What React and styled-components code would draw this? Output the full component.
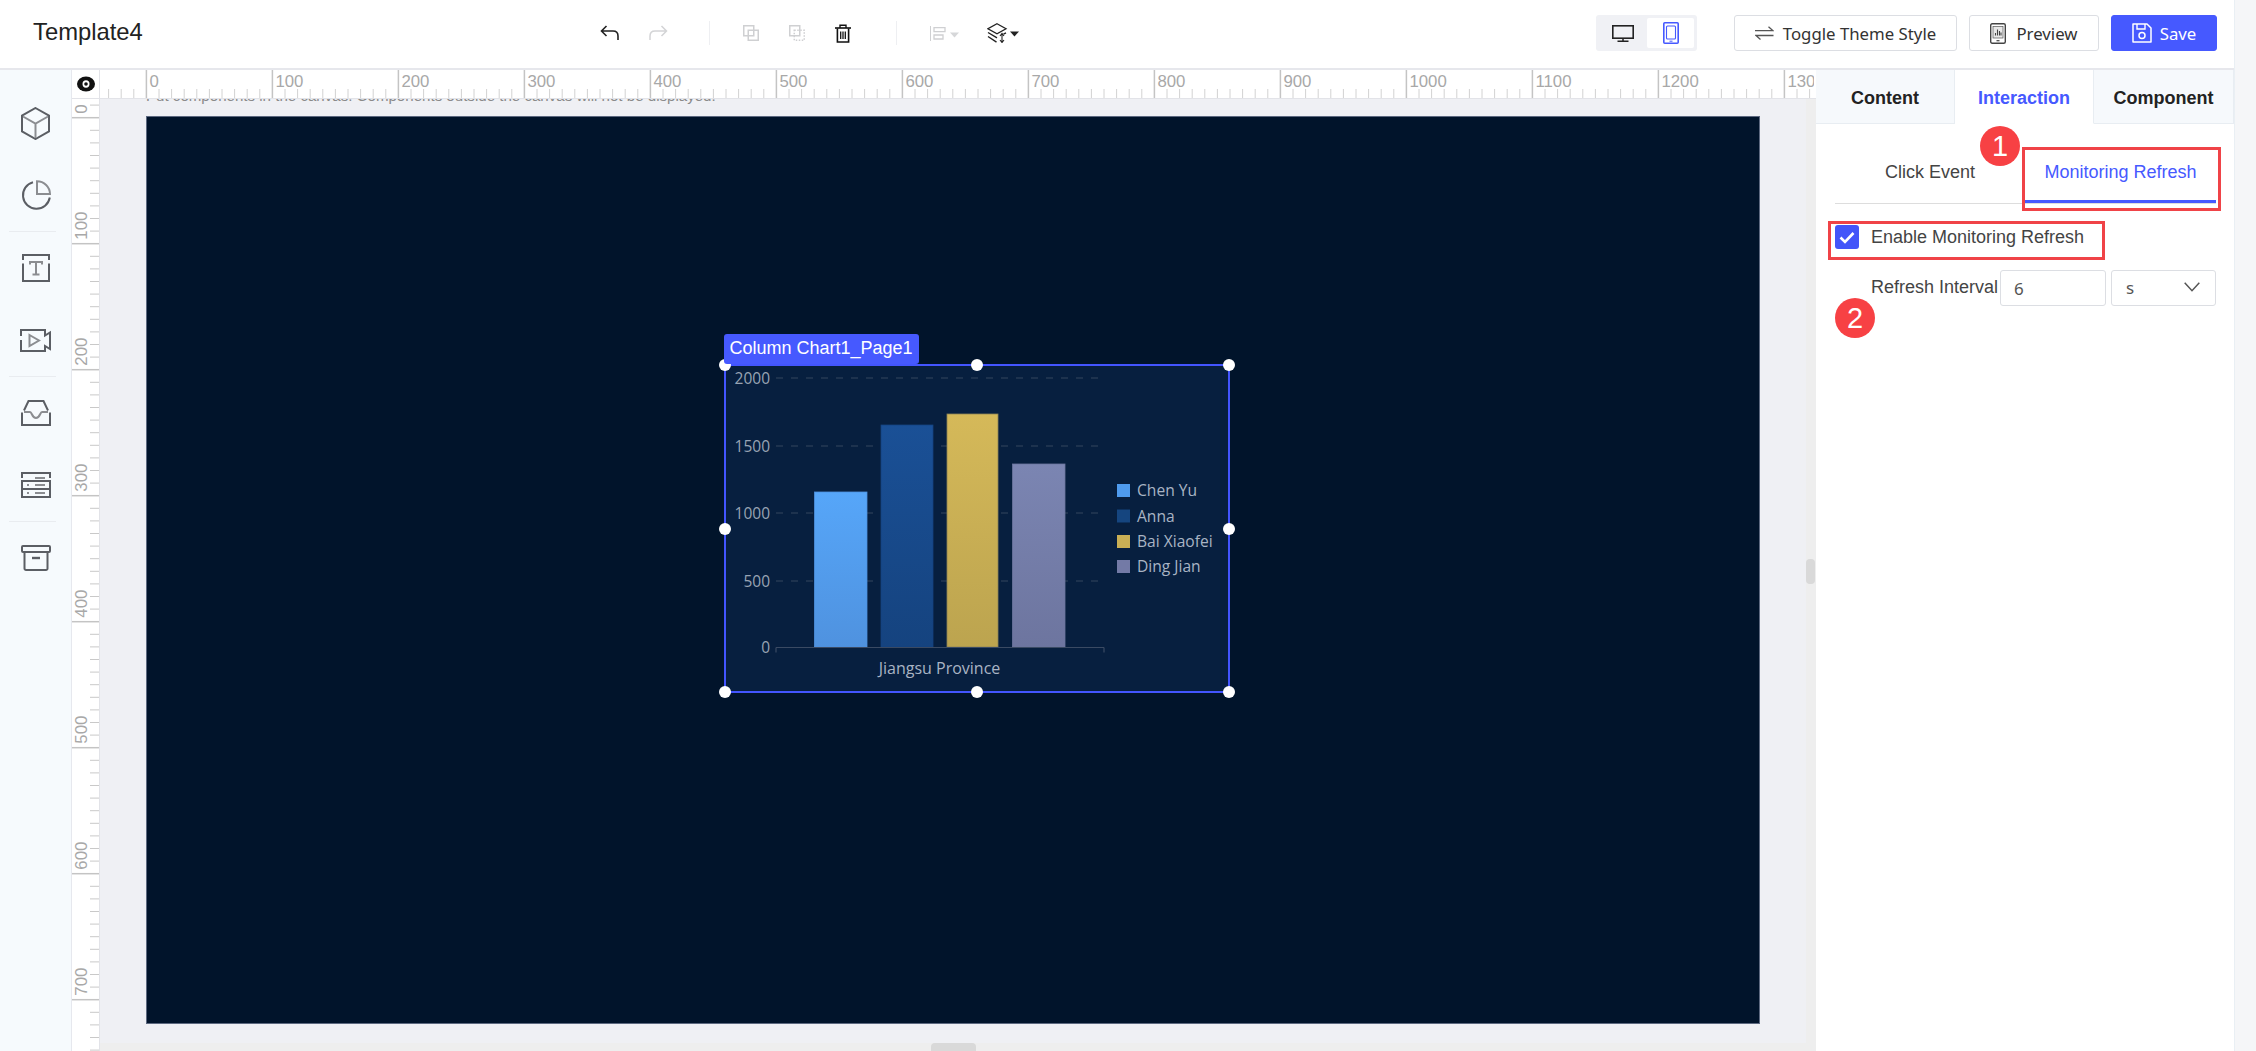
import React from 'react';
import styled, { createGlobalStyle } from 'styled-components';

const Global = createGlobalStyle`
  html, body { margin: 0; padding: 0; height: 100%; overflow: hidden; background: #f5f6f8; }
  #root { height: 100%; }
  * { box-sizing: border-box; }
`;

const Page = styled.div`
  display: flex; width: 2256px; height: 1051px; overflow: hidden;
  font-family: "Liberation Sans", Arial, sans-serif; color: #333;
`;
const Main = styled.div`display: flex; flex-direction: column; width: 2234px; height: 100%; background: #fff;`;
const Gutter = styled.div`flex: 1; background: #f5f6f8; border-left: 1px solid #e9eff4;`;

const Header = styled.header`
  display: flex; align-items: center; flex: 0 0 70px; padding: 0 17px 2px 33px;
  background: #fff; border-bottom: 2px solid #e6e7ec;
`;
const Title = styled.h1`flex: 0 0 567px; margin: 0 0 2px; font-size: 23.8px; font-weight: 400; color: #222; line-height: 28px;`;
const ToolGroup = styled.div`display: flex; align-items: center; gap: ${p => p.$gap}px; margin-left: ${p => p.$ml}px;`;
const ToolDivider = styled.span`width: 1px; height: 24px; background: #eeeff2; margin-left: ${p => p.$ml}px;`;
const Spacer = styled.div`flex: 1;`;
const ViewSwitch = styled.div`
  display: flex; align-items: center; justify-content: space-between; width: 101px; height: 36px; padding: 3px 3px 3px 16px;
  background: #f0f1f5; border-radius: 3px; margin-right: 37px;
`;
const ViewActive = styled.div`display: flex; align-items: center; justify-content: center; width: 47px; height: 30px; background: #fff; border-radius: 2px;`;
const Btn = styled.button`
  display: flex; align-items: center; justify-content: center; gap: ${p => p.$gap}px;
  width: ${p => p.$w}px; height: 36px; margin-left: ${p => p.$ml || 0}px; padding: 0;
  border: 1px solid ${p => (p.$primary ? '#4659ff' : '#dcdee3')}; border-radius: 3px;
  background: ${p => (p.$primary ? '#4659ff' : '#fff')}; color: ${p => (p.$primary ? '#fff' : '#333')};
  font-family: "Noto Sans", sans-serif; font-size: 16.8px;
`;

const Body = styled.div`display: flex; flex: 1; min-height: 0;`;
const Sidebar = styled.nav`
  flex: 0 0 72px; display: flex; flex-direction: column; padding-top: 17px;
  background: #f6fafd; border-right: 1px solid #e6e8ee;
`;
const SideSlot = styled.div`display: flex; align-items: center; justify-content: center; height: 72px; flex: none;`;
const SideDivider = styled.div`height: 1px; flex: none; margin: 0 15px 0 9px; background: #e9ecf0;`;
const Stage = styled.div`flex: 0 0 1744px; display: flex; flex-direction: column; min-height: 0;`;
const RulerTop = styled.div`display: flex; flex: 0 0 28px; background: #fff; border-bottom: 1px solid #e2e3e8;`;
const Corner = styled.div`display: flex; align-items: center; justify-content: center; flex: 0 0 28px; border-right: 1px solid #e2e3e8;`;
const RulerGap = styled.div`flex: 1; background: #fff;`;
const StageRow = styled.div`display: flex; flex: 1; min-height: 0;`;
const RulerSide = styled.div`flex: 0 0 28px; background: #fff; border-right: 1px solid #e2e3e8; overflow: hidden;`;
const ViewportColumn = styled.div`flex: 1; display: flex; flex-direction: column; min-width: 0;`;
const ViewportRow = styled.div`flex: 1; display: flex; min-height: 0;`;
const Workspace = styled.div`flex: 1; background: #eff0f4; overflow: hidden; padding-left: 46px;`;
const Hint = styled.div`margin-top: -12px; height: 18px; font-size: 15.1px; line-height: 18px; color: #8a8a8a; white-space: nowrap;`;
const Canvas = styled.div`position: relative; width: 1614px; height: 908px; margin-top: 11px; background: #01142b; border: 1px solid #5d6980;`;
const VTrack = styled.div`flex: 0 0 10px; background: #eeeeee; padding-top: 460px;`;
const VThumb = styled.div`width: 9px; height: 25px; border-radius: 4px; background: #d9d9d9;`;
const HTrack = styled.div`flex: 0 0 8px; background: #eeeeee; padding-left: 831px;`;
const HThumb = styled.div`width: 45px; height: 8px; border-radius: 4px 4px 0 0; background: #d9d9d9;`;

const ChartBox = styled.div`
  position: absolute; left: 577px; top: 247px; width: 506px; height: 329px;
  background: #071f3f; border: 2px solid #4355ff;
`;
const ChartSvg = styled.svg`position: absolute; left: -1px; top: -1px; font-family: "Open Sans", sans-serif;`;
const ChartLabel = styled.div`
  position: absolute; left: -2px; top: -32px; height: 30px; padding: 0 6px 0 5.5px; line-height: 28px; z-index: 2;
  background: #4659ff; color: #fff; font-size: 18px; white-space: nowrap; border-radius: 3px;
`;
const Handle = styled.span`
  position: absolute; width: 12px; height: 12px; border-radius: 50%; background: #fff; z-index: 1;
  left: calc(${p => p.$x}% - 7px + ${p => p.$x / 50}px); top: calc(${p => p.$y}% - 7px + ${p => p.$y / 50}px);
`;

const Panel = styled.aside`position: relative; flex: 1; background: #fff; min-width: 0;`;
const Tabs = styled.div`display: grid; grid-template-columns: 139px 139px 140px; height: 54px;`;
const Tab = styled.div`
  display: flex; align-items: center; justify-content: center; padding-top: 3px;
  font-size: 18px; font-weight: 700; color: ${p => (p.$active ? '#4659ff' : '#222')};
  background: ${p => (p.$active ? '#fff' : '#f6f9fc')};
  border-bottom: 1px solid ${p => (p.$active ? '#fff' : '#e8edf2')};
  border-right: 1px solid #e8edf2;
`;
const SubTabs = styled.div`display: grid; grid-template-columns: 190px 191px; width: 381px; margin: 16px 0 0 19px; border-bottom: 1px solid #dddddd;`;
const SubTab = styled.div`
  display: flex; align-items: center; justify-content: center; height: 63px; padding-top: 5px;
  font-size: 18px; color: ${p => (p.$active ? '#4659ff' : '#444')};
  border-bottom: 3px solid ${p => (p.$active ? '#4659ff' : 'transparent')};
`;
const CheckRow = styled.label`display: flex; align-items: center; gap: 12px; height: 24px; margin: 21px 0 0 19px; font-size: 18px; color: #444;`;
const CheckBox = styled.span`display: flex; align-items: center; justify-content: center; width: 24px; height: 24px; background: #4355f9; border-radius: 3px;`;
const IntervalRow = styled.div`display: flex; align-items: center; height: 36px; margin: 21px 0 0 55px; font-size: 18px; color: #444;`;
const IntervalLabel = styled.span`width: 129px; margin-top: -2px; white-space: nowrap;`;
const NumberInput = styled.input`
  width: 106px; height: 36px; padding: 1px 13px 0; border: 1px solid #dcdee3; border-radius: 3px; outline: none;
  font-family: "Noto Sans", sans-serif; font-size: 17px; color: #555; background: #fff;
`;
const SelectBox = styled.div`
  display: flex; align-items: center; justify-content: space-between; width: 105px; height: 36px; margin-left: 5px; padding: 0 15px 2px 14px;
  border: 1px solid #dcdee3; border-radius: 3px; font-family: "Noto Sans", sans-serif; font-size: 17px; color: #555;
`;
const RedFrame = styled.div`
  position: absolute; left: ${p => p.$l}px; top: ${p => p.$t}px; width: ${p => p.$w}px; height: ${p => p.$h}px;
  border: 3px solid #f04347; pointer-events: none;
`;
const Badge = styled.div`
  position: absolute; left: ${p => p.$l}px; top: ${p => p.$t}px; display: flex; align-items: center; justify-content: center;
  width: 40px; height: 40px; border-radius: 50%; background: #f74144; color: #fff; font-size: 29px;
`;

const Svg = ({ w, h, children, ...rest }) => (
  <svg width={w} height={h} viewBox={`0 0 ${w} ${h}`} fill="none" {...rest}>{children}</svg>
);

const Undo = ({ c = '#222' }) => (
  <Svg w={19} h={16}><path d="M6.5 1 1.5 6l5 5M1.5 6H13c3 0 5 2 5 5v4" stroke={c} strokeWidth="1.6" /></Svg>
);
const Redo = () => (
  <Svg w={19} h={16}><path d="M12.5 1l5 5-5 5M17.5 6H6c-3 0-5 2-5 5v4" stroke="#d3d4d6" strokeWidth="1.5" /></Svg>
);
const CopyFront = () => (
  <Svg w={16} h={16}>
    <path d="M.75.75h10v10h-10zM5.25 5.25h10v10h-10z" stroke="#cfd0d2" strokeWidth="1.5" />
  </Svg>
);
const CopyBack = () => (
  <Svg w={16} h={16}>
    <path d="M.75.75h10v10h-10z" stroke="#cfd0d2" strokeWidth="1.5" />
    <path d="M5.25 5.25h10v10h-10z" stroke="#cfd0d2" strokeWidth="1.5" strokeDasharray="1.5 1.5" />
  </Svg>
);
const Trash = () => (
  <Svg w={16} h={19}>
    <path d="M0 4h16" stroke="#111" strokeWidth="1.6" />
    <path d="M5 4V1.2h6V4" stroke="#111" strokeWidth="1.4" />
    <path d="M2.4 4.5v13.5h11.2V4.5" stroke="#111" strokeWidth="1.6" />
    <path d="M5.7 7.5v7.5M8 7.5v7.5M10.3 7.5v7.5" stroke="#111" strokeWidth="1.3" />
  </Svg>
);
const AlignIcon = () => (
  <Svg w={29} h={15}>
    <path d="M.5 0v15" stroke="#cfd0d2" />
    <path d="M4 1.7h11v4H4zM4 9h9v4H4z" stroke="#cfd0d2" strokeWidth="1.3" />
    <path d="M20 6.500h9l-4.500 5z" fill="#d6d7d9" />
  </Svg>
);
const LayersIcon = () => (
  <Svg w={32} h={20}>
    <path d="M10 .8l9 5-9 5-9-5z" stroke="#222" strokeWidth="1.300" />
    <path d="M1 9.500l9 5.300M1 13.500l8.500 5.600M19 9.800l-2.500 1.400" stroke="#222" strokeWidth="1.400" />
    <path d="M15 10.500v9M13 17l2 2.500 2-2.500M13 13l2-2.500 2 2.500" stroke="#222" strokeWidth="1.100" />
    <path d="M23 8.500h9l-4.500 5z" fill="#222" />
  </Svg>
);
const Desktop = () => (
  <Svg w={22} h={17}>
    <rect x=".8" y=".8" width="20.4" height="12.4" stroke="#222" strokeWidth="1.6" />
    <path d="M11 13v3M5.500 16.200h11" stroke="#222" strokeWidth="1.5" />
  </Svg>
);
const Phone = () => (
  <Svg w={16} h={22}>
    <rect x=".8" y=".8" width="14.4" height="20.4" rx="1" stroke="#4659ff" strokeWidth="1.6" />
    <rect x="3.5" y="4" width="9" height="13" rx="1" stroke="#4659ff" strokeWidth="1.1" />
    <path d="M6.5 19.2h3" stroke="#4659ff" />
  </Svg>
);
const Swap = () => (
  <Svg w={19} h={14}>
    <path d="M0 4.700h18L13.500.700M18.500 9.500H1L5.500 13.500" stroke="#555" strokeWidth="1.3" />
  </Svg>
);
const PreviewIcon = () => (
  <Svg w={16} h={21}>
    <rect x=".7" y=".7" width="14.6" height="19.6" rx="1.5" stroke="#444" strokeWidth="1.4" />
    <rect x="3" y="3.5" width="10" height="11.5" fill="#e8e8e8" stroke="#555" strokeWidth=".7" />
    <path d="M5.5 12.500v-2.500M7.500 12.500V6.500M9.500 12.500V8M11 12.500V9.500" stroke="#444" strokeWidth="1.1" />
    <path d="M6.5 17.7h3" stroke="#444" strokeWidth="1.2" />
  </Svg>
);
const SaveIcon = () => (
  <Svg w={20} h={20}>
    <path d="M1 1h14l4 4v14H1z" stroke="#fff" strokeWidth="1.5" strokeLinejoin="round" />
    <path d="M5 1v5h8V1" stroke="#fff" strokeWidth="1.4" />
    <circle cx="10" cy="12.5" r="3" stroke="#fff" strokeWidth="1.5" />
  </Svg>
);
const Eye = () => (
  <Svg w={20} h={20}>
    <ellipse cx="10" cy="10" rx="9" ry="7.5" fill="#111" />
    <ellipse cx="10" cy="10" rx="3.5" ry="3.7" fill="#fff" />
    <circle cx="10" cy="10" r="1.8" fill="#111" />
  </Svg>
);
const Check = () => (
  <Svg w={16} h={13}><path d="M1.500 6.500 6 11l8.500-9" stroke="#fff" strokeWidth="2.6" /></Svg>
);
const Chevron = () => (
  <Svg w={16} h={10}><path d="M.7.7 8 8.700 15.300.7" stroke="#555" strokeWidth="1.5" /></Svg>
);

const sideDark = '#5b5e64';
const sideSoft = '#8b8d91';
const Cube = () => (
  <Svg w={29} h={33}>
    <path d="M14.500 1 28 8.700v15.600L14.500 32 1 24.300V8.700z" stroke={sideDark} strokeWidth="2" />
    <path d="M2 9.500l12.500 7 12.500-7M14.500 16.500V31" stroke={sideSoft} strokeWidth="2" />
  </Svg>
);
const Pie = () => (
  <Svg w={31} h={30}>
    <path d="M13 2.200A13.500 13.500 0 1 0 29.800 17.500" stroke={sideDark} strokeWidth="2" />
    <path d="M17 1.200A13 13 0 0 1 30 14H17z" stroke={sideSoft} strokeWidth="2" />
  </Svg>
);
const TextIcon = () => (
  <Svg w={28} h={28}>
    <path d="M1 6V1h26v5M27 9.500V27H1V9.500" stroke={sideDark} strokeWidth="2" />
    <path d="M8 10.500V8h12v2.500M14 8v12M10.500 20.500h7" stroke={sideSoft} strokeWidth="2" />
  </Svg>
);
const VideoIcon = () => (
  <Svg w={31} h={23}>
    <path d="M1 7V1h24v5.500l5-3V20l-5-3v5H1V11" stroke={sideDark} strokeWidth="2" />
    <path d="M9.500 6 19 11.500 9.500 17z" stroke={sideSoft} strokeWidth="2" />
  </Svg>
);
const InboxIcon = () => (
  <Svg w={30} h={26}>
    <path d="M3 10.500 7.500 1h15L27 10.500" stroke={sideDark} strokeWidth="2" />
    <path d="M1 12.500V25h28V12.500" stroke={sideDark} strokeWidth="2" />
    <path d="M3 12h6c2 0 2 6 6 6s4-6 6-6h6" stroke={sideSoft} strokeWidth="2" />
  </Svg>
);
const ServerIcon = () => (
  <Svg w={30} h={26}>
    <path d="M1 6V1h28v5" stroke={sideDark} strokeWidth="2" />
    <path d="M14 6h10" stroke={sideSoft} strokeWidth="2" />
    <path d="M1 9h28v8H1zM1 17h28v8H1z" stroke={sideDark} strokeWidth="2" />
    <path d="M6 13h2M14 13h10M6 21h2M14 21h10" stroke={sideSoft} strokeWidth="2" />
  </Svg>
);
const ArchiveIcon = () => (
  <Svg w={30} h={26}>
    <rect x="1" y="1" width="28" height="6" rx="1" stroke={sideDark} strokeWidth="2" />
    <path d="M3.500 8v15.500a1.500 1.500 0 0 0 1.500 1.500h20a1.500 1.500 0 0 0 1.500-1.500V8" stroke={sideDark} strokeWidth="2" />
    <path d="M11 13h8" stroke={sideDark} strokeWidth="2.4" />
  </Svg>
);

const tick = 12.6;
const RulerH = () => {
  const origin = 46.4;
  const items = [];
  for (let i = -3; i <= 132; i++) {
    const x = origin + i * tick;
    const major = i % 10 === 0 && i >= 0;
    items.push(
      <line key={i} x1={x} x2={x} y1={major ? 0 : 19} y2={28} stroke={major ? '#c4c4c4' : '#d2d2d2'} strokeWidth={major ? 1.5 : 1} />
    );
    if (major) {
      items.push(
        <text key={`t${i}`} x={x + 3} y={17} fontSize="16.8" fill="#a8a8a8" fontFamily="Liberation Sans, sans-serif">{i * 10}</text>
      );
    }
  }
  return <svg width={1714} height={28} viewBox="0 0 1714 28">{items}</svg>;
};
const RulerV = () => {
  const origin = 18.7;
  const items = [];
  for (let i = -1; i <= 76; i++) {
    const y = origin + i * tick;
    const major = i % 10 === 0 && i >= 0;
    items.push(
      <line key={i} x1={major ? 0 : 18} x2={27} y1={y} y2={y} stroke={major ? '#c4c4c4' : '#c9c9c9'} strokeWidth={major ? 1.5 : 1} />
    );
    if (major) {
      items.push(
        <text key={`t${i}`} transform={`translate(15 ${y - 4}) rotate(-90)`} fontSize="16.8" fill="#a8a8a8" fontFamily="Liberation Sans, sans-serif">{i * 10}</text>
      );
    }
  }
  return <svg width={27} height={953} viewBox="0 0 27 953">{items}</svg>;
};

const grid = [378, 446, 513, 581];
const yLabels = [['2000', 378], ['1500', 446], ['1000', 513], ['500', 581], ['0', 647]];
const bars = [
  { x: 814.5, w: 52.5, top: 492, id: 'g1', from: '#56a6f9', to: '#4f92df', stroke: '#4f92df' },
  { x: 881, w: 52, top: 425, id: 'g2', from: '#1a5096', to: '#15437f', stroke: '#15437f' },
  { x: 947, w: 51, top: 414, id: 'g3', from: '#d5b959', to: '#bca44f', stroke: '#8c8355' },
  { x: 1012.5, w: 52.5, top: 464, id: 'g4', from: '#7b85b2', to: '#6d759f', stroke: '#6d759f' }
];
const legend = [['Chen Yu', 484, '#4f9bee', 490], ['Anna', 509.5, '#15457f', 516], ['Bai Xiaofei', 535, '#c9af55', 541], ['Ding Jian', 560, '#737aa6', 566]];

const ChartDrawing = () => (
  <ChartSvg width={504} height={327} viewBox="725 365 504 327">
    <defs>
      {bars.map(b => (
        <linearGradient key={b.id} id={b.id} x1="0" y1="0" x2="0" y2="1">
          <stop offset="0" stopColor={b.from} />
          <stop offset="1" stopColor={b.to} />
        </linearGradient>
      ))}
    </defs>
    {grid.map(y => (
      <line key={y} x1={776} x2={1104} y1={y} y2={y} stroke="#34465f" strokeWidth="1" strokeDasharray="7 8" />
    ))}
    {bars.map(b => (
      <rect key={b.id} x={b.x} y={b.top} width={b.w} height={647 - b.top} fill={`url(#${b.id})`} stroke={b.stroke} strokeWidth=".8" />
    ))}
    <path d="M776 647.5h328M776 647.5v5M1104 647.5v5" stroke="#3a4a63" strokeWidth="1.2" />
    {yLabels.map(([t, y]) => (
      <text key={t} x={770} y={y + 5.5} textAnchor="end" fontSize="15.5" fill="#98a3b3">{t}</text>
    ))}
    {legend.map(([t, y, c, cy]) => (
      <g key={t}>
        <rect x={1117} y={y} width={13} height={13} fill={c} />
        <text x={1137} y={cy + 5.5} fontSize="15.6" fill="#a9b4c4">{t}</text>
      </g>
    ))}
    <text x={939.5} y={674} textAnchor="middle" fontSize="16" fill="#a9b4c4">Jiangsu Province</text>
  </ChartSvg>
);

const handles = [[0, 0], [50, 0], [100, 0], [0, 50], [100, 50], [0, 100], [50, 100], [100, 100]];

export default function App() {
  return (
    <Page>
      <Global />
      <Main>
        <Header>
          <Title>Template4</Title>
          <ToolGroup $gap={30} $ml={0}><Undo /><Redo /></ToolGroup>
          <ToolDivider $ml={41} />
          <ToolGroup $gap={30} $ml={33}><CopyFront /><CopyBack /><Trash /></ToolGroup>
          <ToolDivider $ml={45} />
          <ToolGroup $gap={28} $ml={33}><AlignIcon /><LayersIcon /></ToolGroup>
          <Spacer />
          <ViewSwitch>
            <Desktop />
            <ViewActive><Phone /></ViewActive>
          </ViewSwitch>
          <Btn $w={223} $gap={9}><Swap />Toggle Theme Style</Btn>
          <Btn $w={130} $gap={10} $ml={12}><PreviewIcon />Preview</Btn>
          <Btn $w={106} $gap={8} $ml={12} $primary><SaveIcon />Save</Btn>
        </Header>
        <Body>
          <Sidebar>
            <SideSlot><Cube /></SideSlot>
            <SideSlot><Pie /></SideSlot>
            <SideDivider />
            <SideSlot><TextIcon /></SideSlot>
            <SideSlot><VideoIcon /></SideSlot>
            <SideDivider />
            <SideSlot><InboxIcon /></SideSlot>
            <SideSlot><ServerIcon /></SideSlot>
            <SideDivider />
            <SideSlot><ArchiveIcon /></SideSlot>
          </Sidebar>
          <Stage>
            <RulerTop>
              <Corner><Eye /></Corner>
              <RulerH />
              <RulerGap />
            </RulerTop>
            <StageRow>
              <RulerSide><RulerV /></RulerSide>
              <ViewportColumn>
                <ViewportRow>
                  <Workspace>
                    <Hint>Put components in the canvas. Components outside the canvas will not be displayed.</Hint>
                    <Canvas>
                      <ChartBox>
                        <ChartDrawing />
                        <ChartLabel>Column Chart1_Page1</ChartLabel>
                        {handles.map(([x, y]) => <Handle key={`${x}-${y}`} $x={x} $y={y} />)}
                      </ChartBox>
                    </Canvas>
                  </Workspace>
                  <VTrack><VThumb /></VTrack>
                </ViewportRow>
                <HTrack><HThumb /></HTrack>
              </ViewportColumn>
            </StageRow>
          </Stage>
          <Panel>
            <Tabs>
              <Tab>Content</Tab>
              <Tab $active>Interaction</Tab>
              <Tab>Component</Tab>
            </Tabs>
            <SubTabs>
              <SubTab>Click Event</SubTab>
              <SubTab $active>Monitoring Refresh</SubTab>
            </SubTabs>
            <CheckRow>
              <CheckBox><Check /></CheckBox>
              Enable Monitoring Refresh
            </CheckRow>
            <IntervalRow>
              <IntervalLabel>Refresh Interval</IntervalLabel>
              <NumberInput readOnly value="6" />
              <SelectBox>s<Chevron /></SelectBox>
            </IntervalRow>
            <RedFrame $l={206} $t={77} $w={199} $h={64} />
            <RedFrame $l={12} $t={151} $w={277} $h={39} />
            <Badge $l={164} $t={56}>1</Badge>
            <Badge $l={19} $t={228}>2</Badge>
          </Panel>
        </Body>
      </Main>
      <Gutter />
    </Page>
  );
}
